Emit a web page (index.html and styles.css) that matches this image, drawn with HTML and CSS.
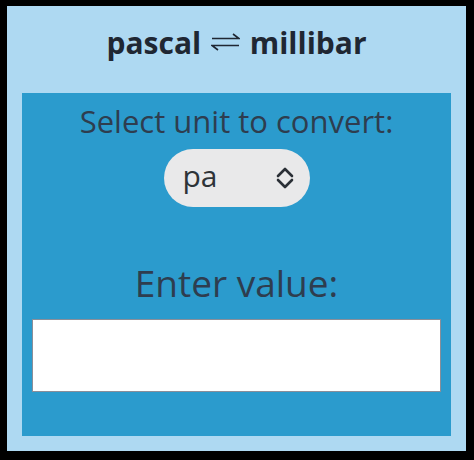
FILE: index.html
```html
<!DOCTYPE html>
<html lang="en">
<head>
<meta charset="utf-8">
<title>pascal to millibar</title>
<link rel="stylesheet" href="styles.css">
</head>
<body>
<div class="frame">
  <h1 class="title">pascal <svg class="harpoons" width="29" height="18" viewBox="0 0 29 18" aria-hidden="true"><path d="M1 5.5H28L22 1M28 12.5H1L7 17" fill="none" stroke="#1f2733" stroke-width="1.6" stroke-linejoin="miter"/></svg> millibar</h1>
  <div class="panel">
    <label class="label small" for="unit">Select unit to convert:</label>
    <div class="select">
      <span class="select-value">pa</span>
      <svg class="chev" width="18" height="24" viewBox="0 0 18 24" aria-hidden="true"><path d="M2 10L9 3L16 10M2 14L9 21L16 14" fill="none" stroke="#2a2f36" stroke-width="2.6" stroke-linecap="round" stroke-linejoin="round"/></svg>
    </div>
    <label class="label big" for="val">Enter value:</label>
    <input class="value" id="val" type="text">
  </div>
</div>
</body>
</html>
```

FILE: styles.css
```css
html, body {
  margin: 0;
  padding: 0;
  background: #000;
}
body {
  width: 474px;
  height: 460px;
  font-family: "Open Sans", "Noto Sans", sans-serif;
}
.frame {
  margin: 6px 8px 0 7px;
  width: 459px;
  height: 445px;
  box-sizing: border-box;
  background: #aed9f2;
  padding: 0 15px 15px 15px;
  display: flex;
  flex-direction: column;
}
.title {
  margin: 0;
  padding: 16px 0 0;
  height: 87px;
  box-sizing: border-box;
  font-size: 30px;
  font-weight: 700;
  line-height: 41px;
  color: #1f2733;
  text-align: center;
}
.harpoons {
  vertical-align: 3px;
  margin: 0 2px;
}
.panel {
  flex: 1;
  background: #2b9bcd;
  display: flex;
  flex-direction: column;
  align-items: center;
  padding: 7px 10px 0;
}
.label {
  display: block;
  color: #2e3d4f;
  text-align: center;
}
.small {
  font-size: 31px;
  line-height: 42px;
}
.big {
  font-size: 37px;
  line-height: 50px;
  margin-top: 51px;
}
.select {
  margin-top: 7px;
  width: 146px;
  height: 58px;
  box-sizing: border-box;
  border-radius: 29px;
  background: #e9e9ea;
  display: flex;
  align-items: center;
  justify-content: space-between;
  padding: 0 16px 0 19px;
}
.select-value {
  font-size: 30px;
  color: #2e3338;
  line-height: 40px;
  margin-top: -4px;
}
.chev {
  display: block;
}
.value {
  margin-top: 11px;
  width: 409px;
  height: 73px;
  box-sizing: border-box;
  border: 1px solid #8a8e99;
  background: #fff;
  padding: 0;
  outline: none;
}
```
